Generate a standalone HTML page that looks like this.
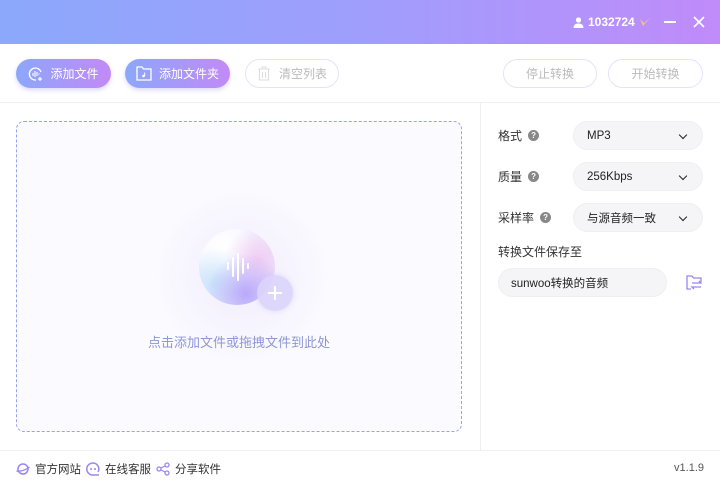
<!DOCTYPE html>
<html><head><meta charset="utf-8"><style>
*{margin:0;padding:0;box-sizing:border-box}
body{width:720px;height:481px;overflow:hidden;background:#fff;font-family:"Liberation Sans","Noto Sans CJK SC",sans-serif;position:relative;color:#333}
.hdr{position:absolute;left:0;top:0;width:720px;height:44px;background:linear-gradient(90deg,#8ba8fb 0%,#9f9efc 50%,#c08bfa 100%)}
.btn{position:absolute;top:59px;height:29px;border-radius:15px;font-size:12px;display:flex;align-items:center;justify-content:center;color:#fff}
.g{background:linear-gradient(90deg,#8ca7fb,#c28af6);box-shadow:0 2px 5px rgba(150,140,240,.35)}
.o{border:1px solid #e6e2fb;color:#bbb;background:#fff}
.drop{position:absolute;left:16px;top:121px;width:446px;height:311px;border:1.5px dashed #98a3ea;border-radius:8px;background:#fafaff}
.lbl{position:absolute;left:498px;font-size:12px;color:#333;display:flex;align-items:center;gap:6px}
.q{width:11px;height:11px;border-radius:50%;background:#888;color:#fff;font-size:8px;font-weight:bold;display:flex;align-items:center;justify-content:center}
.sel{position:absolute;left:573px;width:130px;height:29px;border-radius:15px;background:#f5f5f7;border:1px solid #efeff2;font-size:11.5px;padding-left:13px;display:flex;align-items:center;color:#222}
.sel.a:after{content:"";position:absolute;right:16px;top:10px;width:5px;height:5px;border-right:1.6px solid #222;border-bottom:1.6px solid #222;transform:rotate(45deg)}
.ft{position:absolute;top:461px;font-size:11.5px;color:#333;display:flex;align-items:center;gap:5px}
</style></head><body>
<div class="hdr">
 <div style="position:absolute;left:573px;top:15px;color:#fff;font-size:12px;font-weight:bold;display:flex;align-items:center;gap:4px">
  <svg width="11" height="11" viewBox="0 0 11 11"><circle cx="5.5" cy="3" r="2.6" fill="#fff"/><path d="M0.5 11 Q0.5 6.5 5.5 6.5 Q10.5 6.5 10.5 11Z" fill="#fff"/></svg>1032724
  <svg width="12" height="11" viewBox="0 0 12 11"><path d="M1 2 L4 9 L11 1 L5 6Z" fill="#f7c27a"/></svg></div>
 <div style="position:absolute;left:664px;top:21px;width:12px;height:1.5px;background:#fff"></div>
 <svg style="position:absolute;left:693px;top:16px" width="12" height="12"><path d="M1 1L11 11M11 1L1 11" stroke="#fff" stroke-width="1.6"/></svg>
</div>
<div class="btn g" style="left:16px;width:95px"><svg width="16" height="16" viewBox="0 0 16 16" style="margin-right:6px"><path d="M13 6A6 6 0 1 0 8 14" fill="none" stroke="#fff" stroke-width="1.3"/><path d="M5 7v3M7 5v6M9 6v4M11 7.5v1" stroke="#fff" stroke-width="1.1"/><path d="M12 11v4M10 13h4" stroke="#fff" stroke-width="1.2"/></svg>添加文件</div>
<div class="btn g" style="left:125px;width:105px"><svg width="16" height="15" viewBox="0 0 16 15" style="margin-right:7px"><path d="M1 1h5l1.5 2H15v11H1Z" fill="none" stroke="#fff" stroke-width="1.3"/><circle cx="7.5" cy="10" r="1.3" fill="#fff"/><path d="M8.7 10V6.5" stroke="#fff" stroke-width="1"/></svg>添加文件夹</div>
<div class="btn o" style="left:245px;width:94px"><svg width="14" height="15" viewBox="0 0 14 15" style="margin-right:8px"><path d="M1 3h12M5 3V1h4v2M2.5 3v11h9V3M5.5 6v6M8.5 6v6" fill="none" stroke="#ddd" stroke-width="1.1"/></svg>清空列表</div>
<div class="btn o" style="left:503px;width:94px">停止转换</div>
<div class="btn o" style="left:608px;width:95px">开始转换</div>
<div style="position:absolute;left:0;top:102px;width:720px;height:1px;background:#f0f0f3"></div>
<div style="position:absolute;left:480px;top:103px;width:1px;height:347px;background:#f0f0f3"></div>
<div style="position:absolute;left:0;top:450px;width:720px;height:1px;background:#f0f0f3"></div>
<div class="drop">
 <div style="position:absolute;left:140px;top:70px;width:170px;height:170px;border-radius:50%;background:radial-gradient(circle,#f1eefc 0%,#f8f6fe 55%,rgba(250,250,255,0) 72%)"></div>
 <div style="position:absolute;left:182px;top:107px;width:76px;height:76px;border-radius:50%;background:radial-gradient(circle at 62% 85%,#b9a8fa 0%,rgba(185,168,250,0) 50%),radial-gradient(circle at 20% 72%,#c9e6fb 0%,rgba(201,230,251,0) 45%),radial-gradient(circle at 78% 40%,#f0cdf3 0%,rgba(240,205,243,0) 45%),radial-gradient(circle at 30% 25%,#fff 0%,#fafaff 30%,rgba(240,236,253,0) 60%),#ece7fc"></div>
 <svg style="position:absolute;left:209px;top:131px" width="24" height="28"><path d="M2 10v6M7 5v18M12 1v26M17 6v14M22 11v4" stroke="#fff" stroke-width="2" stroke-linecap="round"/></svg>
 <div style="position:absolute;left:240px;top:153px;width:36px;height:36px;border-radius:50%;background:rgba(220,212,252,.9);box-shadow:0 0 6px rgba(190,180,250,.4)"></div>
 <svg style="position:absolute;left:250px;top:163px" width="16" height="16"><path d="M8 1v14M1 8h14" stroke="#fff" stroke-width="2"/></svg>
 <div style="position:absolute;left:0;width:100%;top:210px;text-align:center;font-size:13px;color:#8e97d8">点击添加文件或拖拽文件到此处</div>
</div>
<div class="lbl" style="top:127px">格式<span class="q">?</span></div>
<div class="lbl" style="top:168px">质量<span class="q">?</span></div>
<div class="lbl" style="top:209px">采样率<span class="q">?</span></div>
<div class="sel a" style="top:121px">MP3</div>
<div class="sel a" style="top:162px">256Kbps</div>
<div class="sel a" style="top:203px">与源音频一致</div>
<div class="lbl" style="top:243px">转换文件保存至</div>
<div class="sel" style="top:268px;left:498px;width:169px;padding-left:12px;font-size:11.5px">sunwoo转换的音频</div>
<svg style="position:absolute;left:686px;top:275px" width="16" height="15" viewBox="0 0 16 15"><path d="M5 14H1V1h5l1.5 2H15v4" fill="none" stroke="#9a86f5" stroke-width="1.3"/><path d="M6 8h9l-2-2M15 12H6l2 2" fill="none" stroke="#9a86f5" stroke-width="1.3"/></svg>
<div class="ft" style="left:16px"><svg width="14" height="14" viewBox="0 0 14 14"><circle cx="7" cy="7" r="5" fill="none" stroke="#9a86f5" stroke-width="1.5"/><path d="M0.5 9Q7 10 13.5 5" fill="none" stroke="#9a86f5" stroke-width="1.4"/></svg>官方网站</div>
<div class="ft" style="left:86px"><svg width="14" height="14" viewBox="0 0 14 14"><path d="M12 10A6 6 0 1 0 7 13H13" fill="none" stroke="#9a86f5" stroke-width="1.5"/><circle cx="5" cy="7" r="1" fill="#9a86f5"/><circle cx="9" cy="7" r="1" fill="#9a86f5"/></svg>在线客服</div>
<div class="ft" style="left:156px"><svg width="14" height="14" viewBox="0 0 14 14"><circle cx="3" cy="7" r="2" fill="none" stroke="#9a86f5" stroke-width="1.3"/><circle cx="11" cy="3" r="2" fill="none" stroke="#9a86f5" stroke-width="1.3"/><circle cx="11" cy="11" r="2" fill="none" stroke="#9a86f5" stroke-width="1.3"/><path d="M5 6l4-2M5 8l4 2" stroke="#9a86f5" stroke-width="1.2"/></svg>分享软件</div>
<div style="position:absolute;right:16px;top:462px;font-size:11px;color:#555">v1.1.9</div>
</body></html>
